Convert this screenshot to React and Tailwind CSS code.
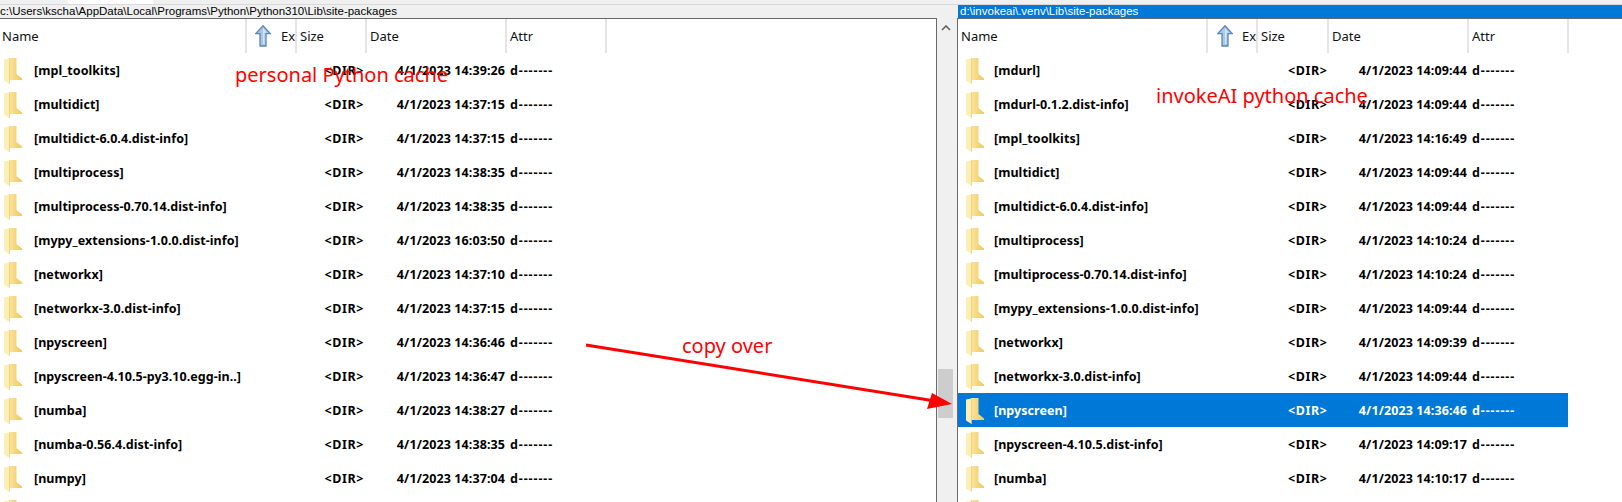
const leftRows = [
  ["[mpl_toolkits]", "4/1/2023 14:39:26"],
  ["[multidict]", "4/1/2023 14:37:15"],
  ["[multidict-6.0.4.dist-info]", "4/1/2023 14:37:15"],
  ["[multiprocess]", "4/1/2023 14:38:35"],
  ["[multiprocess-0.70.14.dist-info]", "4/1/2023 14:38:35"],
  ["[mypy_extensions-1.0.0.dist-info]", "4/1/2023 16:03:50"],
  ["[networkx]", "4/1/2023 14:37:10"],
  ["[networkx-3.0.dist-info]", "4/1/2023 14:37:15"],
  ["[npyscreen]", "4/1/2023 14:36:46"],
  ["[npyscreen-4.10.5-py3.10.egg-in..]", "4/1/2023 14:36:47"],
  ["[numba]", "4/1/2023 14:38:27"],
  ["[numba-0.56.4.dist-info]", "4/1/2023 14:38:35"],
  ["[numpy]", "4/1/2023 14:37:04"],
  ["", ""],
];

const rightRows = [
  ["[mdurl]", "4/1/2023 14:09:44"],
  ["[mdurl-0.1.2.dist-info]", "4/1/2023 14:09:44"],
  ["[mpl_toolkits]", "4/1/2023 14:16:49"],
  ["[multidict]", "4/1/2023 14:09:44"],
  ["[multidict-6.0.4.dist-info]", "4/1/2023 14:09:44"],
  ["[multiprocess]", "4/1/2023 14:10:24"],
  ["[multiprocess-0.70.14.dist-info]", "4/1/2023 14:10:24"],
  ["[mypy_extensions-1.0.0.dist-info]", "4/1/2023 14:09:44"],
  ["[networkx]", "4/1/2023 14:09:39"],
  ["[networkx-3.0.dist-info]", "4/1/2023 14:09:44"],
  ["[npyscreen]", "4/1/2023 14:36:46"],
  ["[npyscreen-4.10.5.dist-info]", "4/1/2023 14:09:17"],
  ["[numba]", "4/1/2023 14:10:17"],
  ["", ""],
];

function Folder({ id }) {
  return (
    <svg width="18" height="26" viewBox="0 0 18 26" className="shrink-0">
      <defs>
        <linearGradient id={id} x1="0" x2="1" y1="0" y2="0">
          <stop offset="0" stopColor="#fbe59c" />
          <stop offset="1" stopColor="#efc760" />
        </linearGradient>
      </defs>
      <path d="M5 0h7.5v16l5.5 4.5V22H5z" fill={"url(#" + id + ")"} />
      <path d="M0 1.5L5.5.5V26L0 22.5z" fill="#fdeeb6" />
      <path d="M5.5.5V26" stroke="#e8c568" strokeWidth=".6" />
    </svg>
  );
}

function UpArrow() {
  return (
    <svg width="16" height="22" viewBox="0 0 16 22" className="shrink-0">
      <path
        d="M8 .8L15.2 8.6H11V21H5V8.6H.8z"
        fill="#a9c8ea"
        stroke="#5a86b8"
        strokeWidth="1.3"
      />
      <path d="M8 3L11.5 7.4H9.5V19H8z" fill="#d7e6f6" />
    </svg>
  );
}

function Pane({ path, active, rows, cols, prefix, selected }) {
  return (
    <div className="flex flex-col h-full overflow-hidden" style={{ width: cols.pane }}>
      <div
        className={
          "h-[13px] mt-[5px] shrink-0 flex items-center text-[11.5px] leading-none whitespace-nowrap font-['Liberation_Sans',sans-serif] " +
          (active ? "bg-[#0078d7] text-white pl-[2px]" : "bg-[#f0f0f0] text-black")
        }
      >
        {path}
      </div>
      <div className="h-[1px] shrink-0 bg-[#696969]" />
      <div className="h-[34px] shrink-0 flex text-[13px] text-[#111]">
        <div className="flex items-center pt-[2px] border-r-2 border-[#e5e5e5]" style={{ width: cols.name, paddingLeft: cols.namePad }}>
          Name
        </div>
        <div className="flex items-center border-r-2 border-[#e5e5e5]" style={{ width: cols.ext, paddingLeft: cols.arrowPad }}>
          <UpArrow />
          <span className="pt-[2px]" style={{ marginLeft: cols.exGap }}>
            Ex
          </span>
        </div>
        <div className="flex items-center pt-[2px] border-r-2 border-[#e5e5e5] pl-[3px]" style={{ width: cols.size }}>
          Size
        </div>
        <div className="flex items-center pt-[2px] border-r-2 border-[#e5e5e5] pl-[3px]" style={{ width: cols.date }}>
          Date
        </div>
        <div className="flex items-center pt-[2px] border-r-2 border-[#e5e5e5] pl-[3px]" style={{ width: cols.attr }}>
          Attr
        </div>
      </div>
      <div>
        {rows.map(([name, date], i) => {
          const isSel = name === selected;
          return (
            <div
              key={i}
              className={
                "h-[34px] pt-[2px] flex items-center font-bold text-[12.5px] " +
                (isSel ? "bg-[#0078d7] text-white" : "text-black")
              }
              style={{ width: cols.rowWidth }}
            >
              <div className="flex items-center" style={{ width: cols.rowName, paddingLeft: cols.folderPad }}>
                <Folder id={prefix + i} />
                <span className="whitespace-nowrap tracking-[0.05px]" style={{ marginLeft: cols.textGap }}>
                  {name}
                </span>
              </div>
              {name && (
                <>
                  <span className="text-right tracking-[0.6px]" style={{ width: cols.dirWidth }}>
                    &lt;DIR&gt;
                  </span>
                  <span className="text-right tracking-[0.1px]" style={{ width: cols.dateWidth }}>
                    {date}
                  </span>
                  <span className="ml-[5px] tracking-[0.9px]">d-------</span>
                </>
              )}
            </div>
          );
        })}
      </div>
    </div>
  );
}

export default function App() {
  return (
    <div className="relative w-[1622px] h-[502px] overflow-hidden bg-white font-['Noto_Sans',sans-serif]">
      <div className="absolute left-0 top-0 w-full h-[5px] bg-[#f0f0f0] border-b border-[#d9d9d9]">
        <div className="ml-[68px] w-[85px] h-full bg-white" />
      </div>
      <div className="flex h-full">
        <Pane
          path="c:\Users\kscha\AppData\Local\Programs\Python\Python310\Lib\site-packages"
          rows={leftRows}
          prefix="l"
          cols={{
            pane: 936,
            name: 247,
            namePad: 2,
            ext: 50,
            arrowPad: 8,
            exGap: 10,
            size: 70,
            date: 140,
            attr: 100,
            rowWidth: 936,
            rowName: 300,
            folderPad: 4,
            textGap: 12,
            dirWidth: 64,
            dateWidth: 141,
          }}
        />
        <div className="w-[22px] shrink-0 flex flex-col bg-[#f0f0f0]">
          <div className="h-[18px] shrink-0" />
          <div className="relative flex-1 border-x border-[#696969]">
            <svg width="10" height="6" viewBox="0 0 10 6" className="absolute left-[4px] top-[7px]">
              <path d="M1 5l4-4 4 4" fill="none" stroke="#606060" strokeWidth="1.6" />
            </svg>
            <div className="absolute left-[1px] top-[351px] w-[15px] h-[49px] bg-[#cdcdcd]" />
          </div>
        </div>
        <Pane
          active
          path="d:\invokeai\.venv\Lib\site-packages"
          rows={rightRows}
          prefix="r"
          selected="[npyscreen]"
          cols={{
            pane: 664,
            name: 250,
            namePad: 3,
            ext: 50,
            arrowPad: 9,
            exGap: 9,
            size: 71,
            date: 140,
            attr: 100,
            rowWidth: 610,
            rowName: 330,
            folderPad: 8,
            textGap: 10,
            dirWidth: 38,
            dateWidth: 141,
          }}
        />
      </div>

      {/* red notes drawn over the screenshot */}
      <span className="absolute left-[235px] top-[61px] text-[20px] leading-[28px] text-[#ff0000] whitespace-nowrap">
        personal Python cache
      </span>
      <span className="absolute left-[1156px] top-[82px] text-[20px] leading-[28px] text-[#ff0000] whitespace-nowrap">
        invokeAI python cache
      </span>
      <span className="absolute left-[682px] top-[332px] text-[20px] leading-[28px] text-[#ff0000] whitespace-nowrap">
        copy over
      </span>
      <svg width="1622" height="502" className="absolute left-0 top-0 pointer-events-none">
        <path d="M586 345L935 401" stroke="#ff0000" strokeWidth="3" />
        <path d="M932 393L952 404L927 409z" fill="#ff0000" />
      </svg>
    </div>
  );
}
